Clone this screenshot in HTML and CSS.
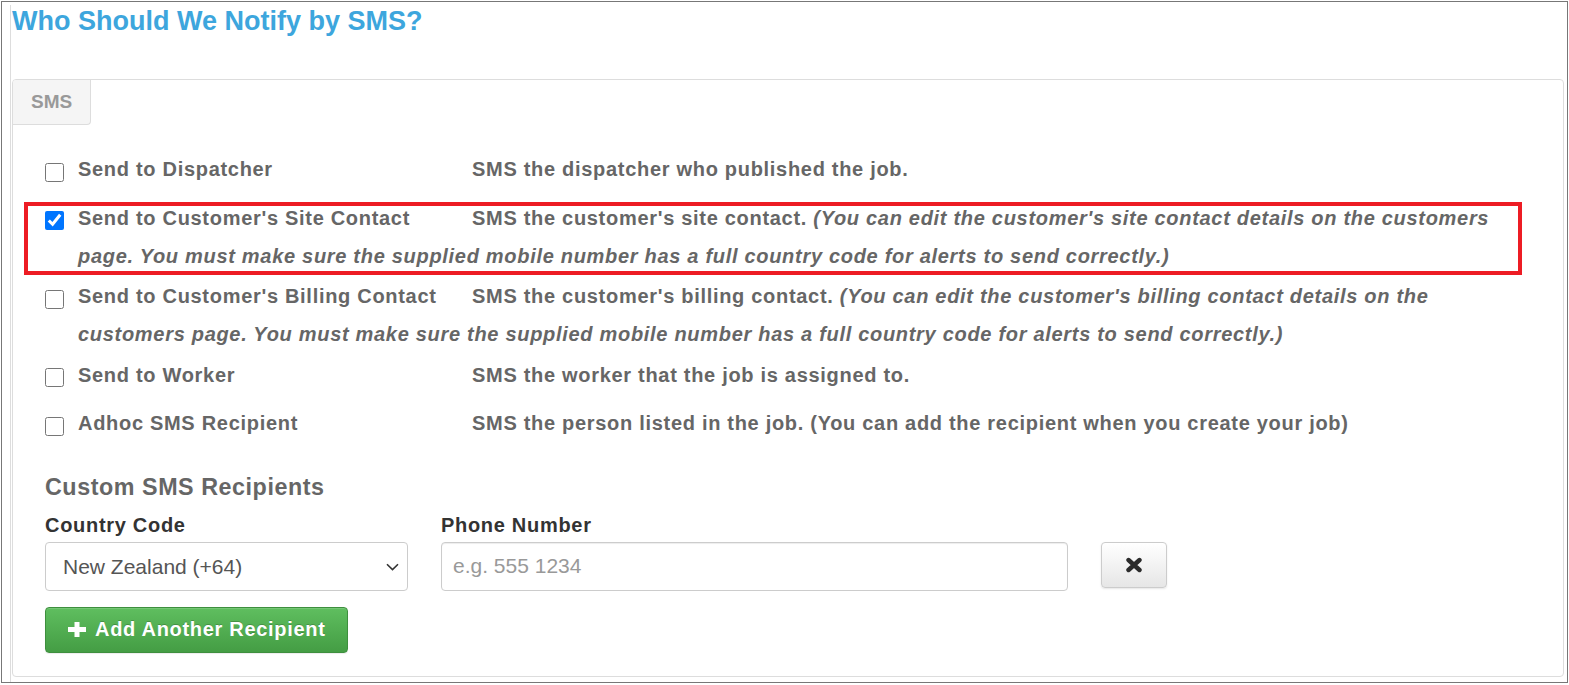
FILE: index.html
```html
<!DOCTYPE html>
<html lang="en">
<head>
<meta charset="utf-8">
<title>Who Should We Notify by SMS?</title>
<link rel="stylesheet" href="styles.css">
</head>
<body>
<div class="frame">
  <div class="page">
    <h1 class="title">Who Should We Notify by SMS?</h1>
    <div class="panel">
      <div class="tab">SMS</div>
      <div class="panel-body">
        <div class="opt">
          <input type="checkbox" class="cb">
          <div class="opt-text"><span class="opt-label">Send to Dispatcher</span>SMS the dispatcher who published the job.</div>
        </div>
        <div class="opt">
          <input type="checkbox" class="cb" checked>
          <div class="opt-text"><span class="opt-label">Send to Customer's Site Contact</span>SMS the customer's site contact. <em>(You can edit the customer's site contact details on the customers page. You must make sure the supplied mobile number has a full country code for alerts to send correctly.)</em></div>
          <span class="callout"></span>
        </div>
        <div class="opt">
          <input type="checkbox" class="cb">
          <div class="opt-text"><span class="opt-label">Send to Customer's Billing Contact</span>SMS the customer's billing contact. <em>(You can edit the customer's billing contact details on the customers page. You must make sure the supplied mobile number has a full country code for alerts to send correctly.)</em></div>
        </div>
        <div class="opt">
          <input type="checkbox" class="cb">
          <div class="opt-text"><span class="opt-label">Send to Worker</span>SMS the worker that the job is assigned to.</div>
        </div>
        <div class="opt">
          <input type="checkbox" class="cb">
          <div class="opt-text"><span class="opt-label">Adhoc SMS Recipient</span>SMS the person listed in the job. (You can add the recipient when you create your job)</div>
        </div>

        <h2 class="section">Custom SMS Recipients</h2>
        <div class="fields">
          <label class="field-label">Country Code</label>
          <label class="field-label">Phone Number</label>
          <span></span>
          <div class="select-wrap">
            <select class="control select"><option>New Zealand (+64)</option></select>
            <svg class="chev" width="13" height="8" viewBox="0 0 13 8"><path d="M1 1.2 L6.5 6.6 L12 1.2" fill="none" stroke="#333" stroke-width="1.6"/></svg>
          </div>
          <input class="control input" type="text" placeholder="e.g. 555 1234">
          <button class="btn-remove" type="button" aria-label="Remove">
            <svg width="18" height="16" viewBox="0 0 18 16"><path d="M3.5 3 L14.5 13 M14.5 3 L3.5 13" stroke="#2b2b2b" stroke-width="4.4" stroke-linecap="round"/></svg>
          </button>
        </div>
        <button class="btn-add" type="button">
          <svg width="18" height="15" viewBox="0 0 18 15"><rect x="0" y="5" width="18" height="5" fill="#fff"/><rect x="6.5" y="0" width="5" height="15" fill="#fff"/></svg>
          Add Another Recipient
        </button>
      </div>
    </div>
  </div>
</div>
</body>
</html>
```
FILE: styles.css
```css
html, body {
  margin: 0;
  padding: 0;
  background: #fff;
}
body {
  font-family: "Liberation Sans", Arial, sans-serif;
}
.frame {
  margin: 1px 0 0 1px;
  width: 1565px;
  height: 680px;
  border: 1px solid #777;
  overflow: hidden;
}
.page {
  margin-left: 8px;
  border-left: 1px solid #ddd;
  height: 100%;
  padding: 0 3px 0 1px;
}
.title {
  margin: 3px 0 42px;
  font-size: 27px;
  line-height: 32px;
  font-weight: bold;
  color: #3da6dd;
}
.panel {
  border: 1px solid #ddd;
  border-radius: 4px;
}
.tab {
  width: fit-content;
  background: #f5f5f5;
  border-right: 1px solid #ddd;
  border-bottom: 1px solid #ddd;
  border-radius: 3px 0 4px 0;
  padding: 0 18px;
  line-height: 44px;
  font-size: 19px;
  font-weight: bold;
  color: #999;
}
.panel-body {
  padding: 25px 31px 23px 32px;
}
.opt {
  display: flex;
  align-items: flex-start;
  min-height: 48.5px;
  padding-bottom: 2.5px;
  box-sizing: border-box;
  position: relative;
}
.cb {
  flex: none;
  width: 19px;
  height: 19px;
  margin: 12.5px 14px 0 0;
  accent-color: #0075ff;
}
.opt-text {
  flex: 1;
  line-height: 38px;
  font-size: 20px;
  font-weight: bold;
  letter-spacing: 0.7px;
  color: #666;
}
.opt-text em {
  font-style: italic;
}
.opt-label {
  display: inline-block;
  width: 394px;
}
.callout {
  position: absolute;
  left: -21px;
  top: 3.5px;
  width: 1498px;
  height: 73px;
  border: 4px solid #ed1c24;
  box-sizing: border-box;
  pointer-events: none;
}
.section {
  margin: 20.5px 0 0;
  font-size: 23.3px;
  line-height: 28px;
  font-weight: bold;
  letter-spacing: 0.55px;
  color: #666;
}
.fields {
  margin-top: 11.7px;
  display: grid;
  grid-template-columns: 363px 627px 66px;
  column-gap: 33px;
  row-gap: 5px;
  align-items: start;
}
.field-label {
  font-size: 20px;
  line-height: 24px;
  font-weight: bold;
  letter-spacing: 0.7px;
  color: #333;
}
.select-wrap {
  position: relative;
}
.control {
  display: block;
  width: 100%;
  height: 49px;
  box-sizing: border-box;
  border: 1px solid #ccc;
  border-radius: 4px;
  background: #fff;
  font-family: "Liberation Sans", Arial, sans-serif;
  font-size: 21px;
  color: #555;
  margin: 0;
  outline: none;
}
.select {
  appearance: none;
  -webkit-appearance: none;
  padding: 0 40px 0 17px;
}
.chev {
  position: absolute;
  right: 9px;
  top: 21px;
}
.input {
  padding: 0 11px;
  box-shadow: inset 0 1px 1px rgba(0,0,0,0.075);
}
.input::placeholder {
  color: #999;
}
.btn-remove {
  width: 66px;
  height: 46px;
  border: 1px solid #ccc;
  border-radius: 4px;
  background: linear-gradient(#ffffff, #e6e6e6);
  box-shadow: 0 1px 2px rgba(0,0,0,0.1);
  display: flex;
  align-items: center;
  justify-content: center;
  padding: 0;
  margin: 0;
}
.btn-add {
  margin-top: 16.3px;
  height: 46px;
  width: 303px;
  display: flex;
  align-items: center;
  gap: 9px;
  padding: 0 0 0 22px;
  border: 1px solid #3e8f3e;
  border-radius: 4px;
  background: linear-gradient(#5fbe5f, #449d44);
  box-shadow: inset 0 1px 0 rgba(255,255,255,0.15), 0 1px 1px rgba(0,0,0,0.075);
  color: #fff;
  font-family: "Liberation Sans", Arial, sans-serif;
  font-size: 20px;
  font-weight: bold;
  letter-spacing: 0.7px;
  text-shadow: 0 -1px 0 rgba(0,0,0,0.2);
}
```
